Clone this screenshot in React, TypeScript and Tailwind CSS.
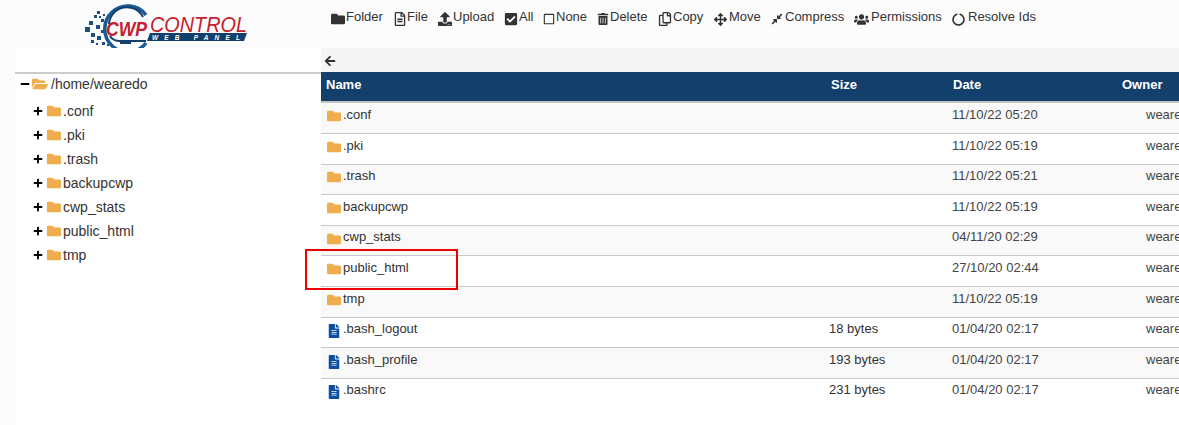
import React from "react";
import {
  FaFolder,
  FaRegFileAlt,
  FaUpload,
  FaCheckSquare,
  FaRegSquare,
  FaTrashAlt,
  FaRegCopy,
  FaArrowsAlt,
  FaCompressAlt,
  FaUsers,
  FaCircleNotch,
  FaFolderOpen,
  FaPlus,
  FaMinus,
  FaArrowLeft,
  FaFileAlt,
} from "react-icons/fa";

const tools = [
  { label: "Folder", icon: FaFolder, size: 14, w: "w-[62px]", box: "w-[15px]" },
  { label: "File", icon: FaRegFileAlt, size: 14, w: "w-[45px]", box: "w-[14px]" },
  { label: "Upload", icon: FaUpload, size: 14, w: "w-[66px]", box: "w-[15px]" },
  { label: "All", icon: FaCheckSquare, size: 14, w: "w-[39px]", box: "w-[15px]" },
  { label: "None", icon: FaRegSquare, size: 12, w: "w-[54px]", box: "w-[13px]" },
  { label: "Delete", icon: FaTrashAlt, size: 12, w: "w-[61px]", box: "w-[13px]" },
  { label: "Copy", icon: FaRegCopy, size: 14, w: "w-[56px]", box: "w-[15px]" },
  { label: "Move", icon: FaArrowsAlt, size: 13, w: "w-[57px]", box: "w-[15px]" },
  { label: "Compress", icon: FaCompressAlt, size: 12, w: "w-[83px]", box: "w-[14px]" },
  { label: "Permissions", icon: FaUsers, size: 15, w: "w-[98px]", box: "w-[17px]" },
  { label: "Resolve Ids", icon: FaCircleNotch, size: 13, w: "w-[90px]", box: "w-[16px]" },
];

const tree = [".conf", ".pki", ".trash", "backupcwp", "cwp_stats", "public_html", "tmp"];

const rows = [
  { name: ".conf", size: "", date: "11/10/22 05:20", dir: true },
  { name: ".pki", size: "", date: "11/10/22 05:19", dir: true },
  { name: ".trash", size: "", date: "11/10/22 05:21", dir: true },
  { name: "backupcwp", size: "", date: "11/10/22 05:19", dir: true },
  { name: "cwp_stats", size: "", date: "04/11/20 02:29", dir: true },
  { name: "public_html", size: "", date: "27/10/20 02:44", dir: true },
  { name: "tmp", size: "", date: "11/10/22 05:19", dir: true },
  { name: ".bash_logout", size: "18 bytes", date: "01/04/20 02:17", dir: false },
  { name: ".bash_profile", size: "193 bytes", date: "01/04/20 02:17", dir: false },
  { name: ".bashrc", size: "231 bytes", date: "01/04/20 02:17", dir: false },
];

function Logo() {
  const dots = [
    [85, 27, 5], [89, 21, 4], [91, 33, 4], [94, 15, 3], [96, 25, 4], [97, 11, 3],
    [91, 40, 3], [97, 36, 4], [101, 30, 3], [101, 19, 3], [96, 43, 2], [102, 42, 3],
    [103, 14, 2], [107, 44, 2], [99, 16, 2],
  ];
  return (
    <svg width="170" height="48" viewBox="82 4 170 48">
      {dots.map(([x, y, s], i) => (
        <rect key={i} x={x} y={y} width={s} height={s} fill="#1f4e79" />
      ))}
      <path d="M146 15 A23 23 0 1 0 146 43" fill="none" stroke="#1a5a96" strokeWidth="3.5" />
      <path d="M143 17 A18 18 0 0 0 109 24" fill="none" stroke="#123f6b" strokeWidth="2" />
      <path d="M110 36 Q113 41 120 41 H146" fill="none" stroke="#123f6b" strokeWidth="2" />
      <rect x="120" y="41" width="11" height="3" fill="#123f6b" />
      <text x="106" y="36" fontFamily="'Liberation Sans', sans-serif" fontSize="20" fontWeight="700" fontStyle="italic" fill="#c4202e" textLength="41" lengthAdjust="spacingAndGlyphs">
        CWP
      </text>
      <text x="150" y="32" fontFamily="'Liberation Sans', sans-serif" fontSize="22" fontStyle="italic" fill="#c4202e" textLength="97" lengthAdjust="spacingAndGlyphs">
        CONTROL
      </text>
      <path d="M150 33 H247 L244 41 H147 Z" fill="#123f6b" />
      <text x="152" y="40" fontFamily="'Liberation Sans', sans-serif" fontSize="6.5" fontWeight="700" fontStyle="italic" fill="#ffffff" textLength="88" lengthAdjust="spacing">
        WEB PANEL
      </text>
    </svg>
  );
}

export default function App() {
  return (
    <div className="w-[1179px] h-[425px] overflow-hidden bg-[#fcfcfc] font-['Liberation_Sans',Arial,sans-serif] relative text-[14px]">
      <div className="flex h-[48px]">
        <div className="w-[321px] flex-none pl-[82px] pt-[4px]">
          <Logo />
        </div>
        <div className="flex pl-[10px] pt-[9px] text-[13px] leading-[16px] text-[#333333]">
          {tools.map((t) => (
            <div key={t.label} className={`flex items-start flex-none ${t.w}`}>
              <span className={`flex-none h-[20px] flex items-center ${t.box}`}>
                <t.icon size={t.size} className="text-[#333333]" />
              </span>
              <span>{t.label}</span>
            </div>
          ))}
        </div>
      </div>

      <div className="flex pl-[15px] h-[377px]">
        <div className="w-[306px] flex-none bg-white pt-[24px] relative">
          <div className="absolute top-[24px] left-0 right-0 h-[2px] bg-[#cccccc]" />
          <div className="h-[24px] flex items-center pl-[5px] text-[#333333]">
            <FaMinus size={10} className="text-black flex-none" />
            <FaFolderOpen size={16} className="ml-[2px] text-[#f0ad4e] flex-none" />
            <span className="ml-[3px]">/home/wearedo</span>
          </div>
          <div className="pt-[3px]">
            {tree.map((n) => (
              <div key={n} className="h-[24px] flex items-center pl-[18px] text-[#333333]">
                <FaPlus size={10} className="text-black flex-none" />
                <FaFolder size={14} className="ml-[4px] text-[#f0ad4e] flex-none" />
                <span className="ml-[2px]">{n}</span>
              </div>
            ))}
          </div>
        </div>

        <div className="flex-1 min-w-0 bg-white">
          <div className="h-[24px] bg-[#f5f5f5] flex items-center pl-[3px] pt-[2px]">
            <FaArrowLeft size={12} className="text-[#333333]" />
          </div>
          <div className="h-[28.5px] pb-[4px] bg-[#123f6b] grid grid-cols-[505px_122px_169px_1fr] items-center text-white font-bold text-[13px]">
            <div className="pl-[5px]">Name</div>
            <div className="pl-[5px]">Size</div>
            <div className="pl-[5px]">Date</div>
            <div className="pl-[5px]">Owner</div>
          </div>
          <div className="h-[2px] bg-[#c4c4c4]" />
          {rows.map((r, i) => (
            <div
              key={r.name}
              className={`h-[30.6px] pb-[7px] grid grid-cols-[505px_122px_169px_1fr] items-center text-[13px] text-[#333333] overflow-hidden whitespace-nowrap ${
                i > 0 ? "border-t border-[#c8c8c8]" : ""
              } ${i % 2 === 0 ? "bg-[#f9f9f9]" : "bg-white"}`}
            >
              <div className="pl-[6px] flex items-center gap-[2px]">
                {r.dir ? (
                  <FaFolder size={14} className="text-[#f0ad4e] mt-[3px]" />
                ) : (
                  <FaFileAlt size={14} className="text-[#0d4f9e] mt-[4px]" />
                )}
                <span>{r.name}</span>
              </div>
              <div className="pl-[3px]">{r.size}</div>
              <div className="pl-[4px] text-[#444444]">{r.date}</div>
              <div className="pl-[29px] text-[#444444]">wearedo</div>
            </div>
          ))}
        </div>
      </div>

      <div className="absolute left-[305px] top-[249px] w-[153px] h-[41px] border-2 border-[#ee0000]" />
    </div>
  );
}
